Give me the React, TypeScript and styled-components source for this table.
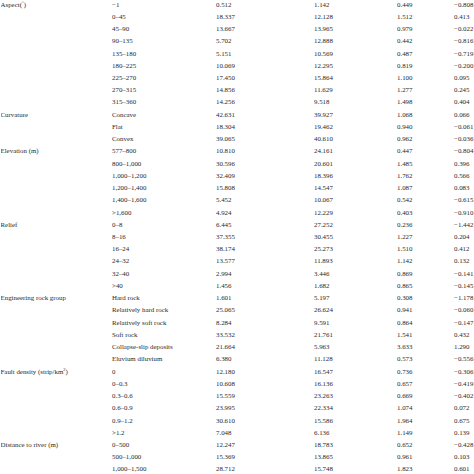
import React from "react";
import styled, { createGlobalStyle } from "styled-components";

const Global = createGlobalStyle`
  html, body {
    margin: 0;
    padding: 0;
    background: #ffffff;
    overflow: hidden;
    width: 474px;
    height: 474px;
  }
`;

const Page = styled.div`
  width: 474px;
  height: 474px;
  overflow: hidden;
  background: #ffffff;
`;

const Table = styled.table`
  margin-top: -1.45px;
  margin-left: 0.5px;
  border-collapse: collapse;
  table-layout: fixed;
  width: 520px;
  font-family: "Liberation Serif", "Times New Roman", serif;
  font-size: 6.9px;
  color: #2a2a2a;
`;

const Row = styled.tr`
  height: 12.23px;
`;

const Cell = styled.td`
  padding: 0;
  line-height: 12.23px;
  white-space: nowrap;
  vertical-align: middle;
  text-align: left;
  overflow: hidden;
`;

const Sup = styled.sup`
  font-size: 4.5px;
  line-height: 0;
  vertical-align: 2.6px;
`;

type R = [string, string, string, string, string];

interface Group {
  label: React.ReactNode;
  rows: R[];
}

const groups: Group[] = [
  {
    label: (
      <>
        Aspect(<Sup>°</Sup>)
      </>
    ),
    rows: [
      ["−1", "0.512", "1.142", "0.449", "−0.808"],
      ["0–45", "18.337", "12.128", "1.512", "0.413"],
      ["45–90", "13.667", "13.965", "0.979", "−0.022"],
      ["90–135", "5.702", "12.888", "0.442", "−0.816"],
      ["135–180", "5.151", "10.569", "0.487", "−0.719"],
      ["180–225", "10.069", "12.295", "0.819", "−0.200"],
      ["225–270", "17.450", "15.864", "1.100", "0.095"],
      ["270–315", "14.856", "11.629", "1.277", "0.245"],
      ["315–360", "14.256", "9.518", "1.498", "0.404"],
    ],
  },
  {
    label: "Curvature",
    rows: [
      ["Concave", "42.631", "39.927", "1.068", "0.066"],
      ["Flat", "18.304", "19.462", "0.940", "−0.061"],
      ["Convex", "39.065", "40.610", "0.962", "−0.036"],
    ],
  },
  {
    label: "Elevation (m)",
    rows: [
      ["577–800", "10.810", "24.161", "0.447", "−0.804"],
      ["800–1,000", "30.596", "20.601", "1.485", "0.396"],
      ["1,000–1,200", "32.409", "18.396", "1.762", "0.566"],
      ["1,200–1,400", "15.808", "14.547", "1.087", "0.083"],
      ["1,400–1,600", "5.452", "10.067", "0.542", "−0.615"],
      [">1,600", "4.924", "12.229", "0.403", "−0.910"],
    ],
  },
  {
    label: "Relief",
    rows: [
      ["0–8", "6.445", "27.252", "0.236", "−1.442"],
      ["8–16", "37.355", "30.455", "1.227", "0.204"],
      ["16–24", "38.174", "25.273", "1.510", "0.412"],
      ["24–32", "13.577", "11.893", "1.142", "0.132"],
      ["32–40", "2.994", "3.446", "0.869", "−0.141"],
      [">40", "1.456", "1.682", "0.865", "−0.145"],
    ],
  },
  {
    label: "Engineering rock group",
    rows: [
      ["Hard rock", "1.601", "5.197", "0.308", "−1.178"],
      ["Relatively hard rock", "25.065", "26.624", "0.941", "−0.060"],
      ["Relatively soft rock", "8.284", "9.591", "0.864", "−0.147"],
      ["Soft rock", "33.532", "21.761", "1.541", "0.432"],
      ["Collapse-slip deposits", "21.664", "5.963", "3.633", "1.290"],
      ["Eluvium diluvium", "6.380", "11.128", "0.573", "−0.556"],
    ],
  },
  {
    label: (
      <>
        Fault density (strip/km<Sup>2</Sup>)
      </>
    ),
    rows: [
      ["0", "12.180", "16.547", "0.736", "−0.306"],
      ["0–0.3", "10.608", "16.136", "0.657", "−0.419"],
      ["0.3–0.6", "15.559", "23.263", "0.669", "−0.402"],
      ["0.6–0.9", "23.995", "22.334", "1.074", "0.072"],
      ["0.9–1.2", "30.610", "15.586", "1.964", "0.675"],
      [">1.2", "7.048", "6.136", "1.149", "0.139"],
    ],
  },
  {
    label: "Distance to river (m)",
    rows: [
      ["0–500", "12.247", "18.783", "0.652", "−0.428"],
      ["500–1,000", "15.369", "13.865", "0.961", "0.103"],
      ["1,000–1,500", "28.712", "15.748", "1.823", "0.601"],
    ],
  },
];

const widths = [111.5, 104, 98, 83, 57, 66.5];

export default function App() {
  return (
    <Page>
      <Global />
      <Table>
        <colgroup>
          {widths.map((w, i) => (
            <col key={i} style={{ width: w }} />
          ))}
        </colgroup>
        <tbody>
          {groups.map((g, gi) =>
            g.rows.map((r, ri) => (
              <Row key={`${gi}-${ri}`}>
                <Cell>{ri === 0 ? g.label : ""}</Cell>
                {r.map((v, ci) => (
                  <Cell key={ci}>{v}</Cell>
                ))}
              </Row>
            ))
          )}
        </tbody>
      </Table>
    </Page>
  );
}
